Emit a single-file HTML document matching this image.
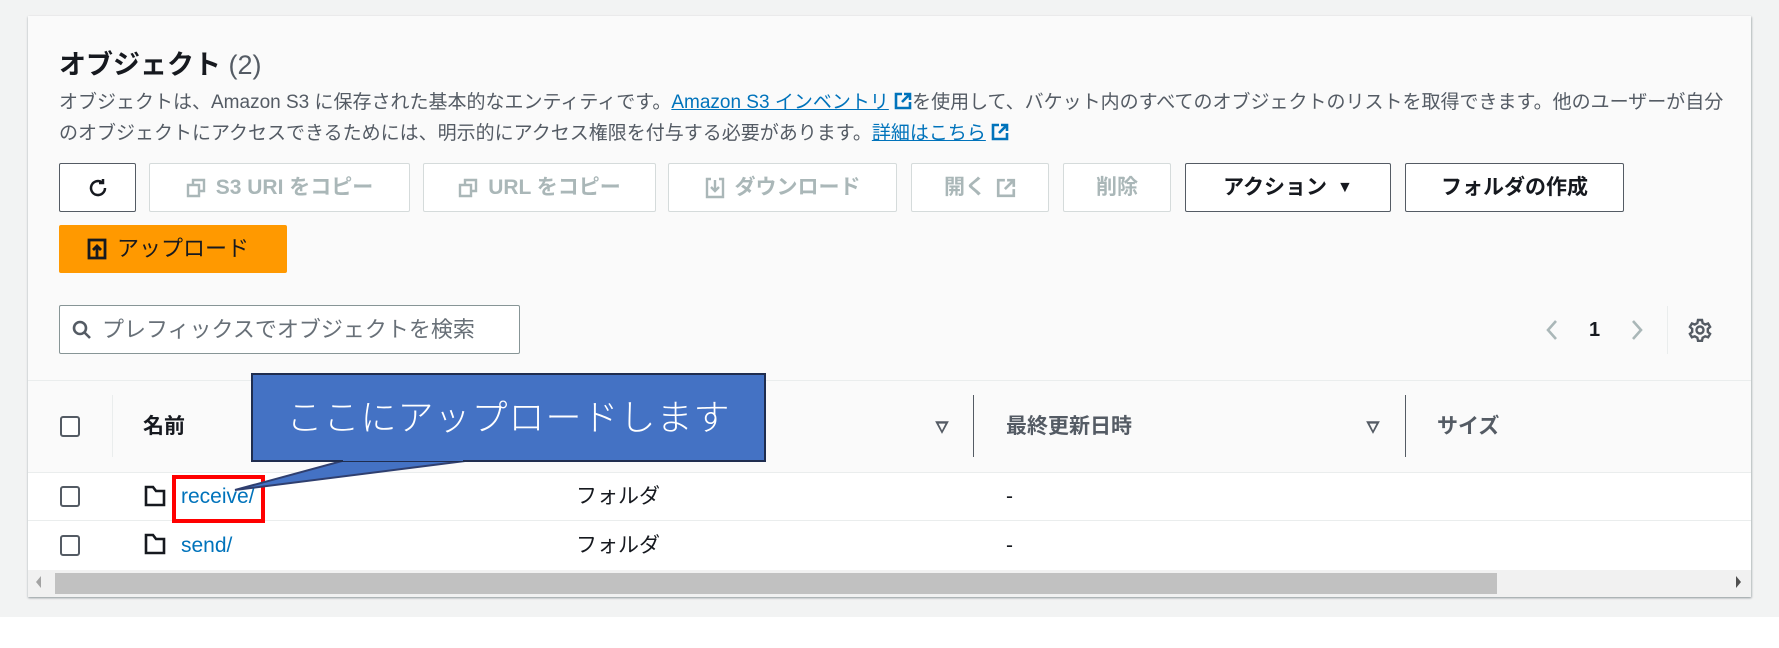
<!DOCTYPE html>
<html><head><meta charset="utf-8"><style>
*{margin:0;padding:0;box-sizing:border-box}
body{width:1779px;height:648px;background:#fff;position:relative;overflow:hidden;font-family:"Liberation Sans","Noto Sans CJK JP",sans-serif;color:#16191f}
.a{position:absolute}
.bg{left:0;top:0;width:1779px;height:617px;background:#f2f3f3}
.card{left:28px;top:16px;width:1723px;height:581px;background:#fafafa;box-shadow:0 1px 2px rgba(0,28,36,.3),1px 1px 2px rgba(0,28,36,.15)}
.btn{position:absolute;top:163px;height:49px;border:1px solid #d5dbdb;border-radius:2px;background:#fff;color:#aab7b8;font-weight:bold;font-size:21px;display:flex;align-items:center;justify-content:center;gap:10px;line-height:1}
.en{border:1px solid #545b64;color:#16191f}
.desc{left:59px;font-size:19px;color:#545b64;white-space:nowrap;line-height:1}
.lnk{color:#0073bb;text-decoration:underline}
.cb{position:absolute;left:60px;width:20px;height:21px;border:2px solid #545b64;border-radius:3px;background:#fff}
.cell{position:absolute;height:48px;display:flex;align-items:center;line-height:1;font-size:21px}
.hd{font-weight:bold;color:#545b64}
.vd{position:absolute;width:1px;background:#545b64;top:395px;height:62px}
</style></head><body>
<div class="a bg"></div>
<div class="a card"></div>
<div class="a" style="left:59px;top:51px;font-size:27px;font-weight:bold;line-height:1.1">オブジェクト <span style="font-weight:normal;color:#545b64">(2)</span></div>
<div class="a desc" style="top:92px">オブジェクトは、Amazon S3 に保存された基本的なエンティティです。<span class="lnk">Amazon S3 インベントリ</span> <svg width="18" height="18" viewBox="0 0 18 18" fill="none" stroke="#0073bb" stroke-width="2.6" style="vertical-align:-2px"><path d="M8 2H2v14h14v-6M10 2h6v6M16 2L8 10"/></svg>を使用して、バケット内のすべてのオブジェクトのリストを取得できます。他のユーザーが自分</div>
<div class="a desc" style="top:123px">のオブジェクトにアクセスできるためには、明示的にアクセス権限を付与する必要があります。<span class="lnk">詳細はこちら</span> <svg width="18" height="18" viewBox="0 0 18 18" fill="none" stroke="#0073bb" stroke-width="2.6" style="vertical-align:-2px"><path d="M8 2H2v14h14v-6M10 2h6v6M16 2L8 10"/></svg></div>

<div class="btn en" style="left:59px;width:77px"><svg width="24" height="24" viewBox="0 0 24 24" fill="none" stroke="#16191f" stroke-width="2.5"><path d="M19 12a7 7 0 1 1-3-5.7"/><path d="M17 3v4h-4"/></svg></div>
<div class="btn" style="left:149px;width:261px"><svg width="20" height="20" viewBox="0 0 20 20" fill="none" stroke="#aab7b8" stroke-width="2.4"><path d="M2 7h11v11H2zM7 7V2h11v11h-5"/></svg>S3 URI をコピー</div>
<div class="btn" style="left:423px;width:233px"><svg width="20" height="20" viewBox="0 0 20 20" fill="none" stroke="#aab7b8" stroke-width="2.4"><path d="M2 7h11v11H2zM7 7V2h11v11h-5"/></svg>URL をコピー</div>
<div class="btn" style="left:668px;width:229px"><svg width="20" height="22" viewBox="0 0 20 22" fill="none" stroke="#aab7b8" stroke-width="2.4"><path d="M6 2H2v18h16V2h-4M10 3v11M6 10l4 4 4-4"/></svg>ダウンロード</div>
<div class="btn" style="left:911px;width:138px">開く <svg width="20" height="20" viewBox="0 0 18 18" fill="none" stroke="#aab7b8" stroke-width="2.4"><path d="M8 2H2v14h14v-6M10 2h6v6M16 2L8 10"/></svg></div>
<div class="btn" style="left:1063px;width:108px">削除</div>
<div class="btn en" style="left:1185px;width:206px">アクション <span style="font-size:16px">▼</span></div>
<div class="btn en" style="left:1405px;width:219px">フォルダの作成</div>
<div class="btn" style="left:59px;top:225px;width:228px;height:48px;background:#ff9900;border-color:#ff9900;color:#16191f;justify-content:flex-start;padding-left:27px;font-weight:normal;font-size:22px"><svg width="20" height="22" viewBox="0 0 20 22" fill="none" stroke="#16191f" stroke-width="2.8"><path d="M2 2h16v18H2z"/><path d="M10 19V8M6 12l4-4 4 4"/></svg>アップロード</div>

<div class="a" style="left:59px;top:305px;width:461px;height:49px;border:1px solid #879596;border-radius:2px;background:#fff;display:flex;align-items:center;padding-left:12px;font-size:22px;color:#687078;gap:10px;line-height:1"><svg width="20" height="20" viewBox="0 0 20 20" fill="none" stroke="#545b64" stroke-width="2.6"><circle cx="8" cy="8" r="6"/><path d="M12.5 12.5L18 18"/></svg>プレフィックスでオブジェクトを検索</div>

<svg class="a" style="left:1544px;top:318px" width="16" height="24" viewBox="0 0 16 24" fill="none" stroke="#aab7b8" stroke-width="2.6"><path d="M12 3L4 12l8 9"/></svg>
<div class="a" style="left:1589px;top:320px;font-size:20px;font-weight:bold;line-height:1">1</div>
<svg class="a" style="left:1629px;top:318px" width="16" height="24" viewBox="0 0 16 24" fill="none" stroke="#aab7b8" stroke-width="2.6"><path d="M4 3l8 9-8 9"/></svg>
<div class="a" style="left:1667px;top:306px;width:1px;height:48px;background:#eaeded"></div>
<svg class="a" style="left:1688px;top:318px" width="24" height="24" viewBox="0 0 24 24" fill="none" stroke="#545b64" stroke-width="2.4"><circle cx="12" cy="12" r="3.5"/><path d="M10 2h4l.6 3 2.6 1.5 2.9-1 2 3.4-2.3 2v3l2.3 2-2 3.4-2.9-1-2.6 1.5-.6 3h-4l-.6-3-2.6-1.5-2.9 1-2-3.4 2.3-2v-3l-2.3-2 2-3.4 2.9 1L9.4 5z"/></svg>

<div class="a" style="left:28px;top:380px;width:1723px;height:1px;background:#eaeded"></div>
<div class="a" style="left:28px;top:472px;width:1723px;height:98px;background:#fff"></div>
<div class="a" style="left:28px;top:472px;width:1723px;height:1px;background:#eaeded"></div>
<div class="a" style="left:28px;top:520px;width:1723px;height:1px;background:#eaeded"></div>
<div class="cb" style="top:416px"></div>
<div class="vd" style="left:112px;background:#eaeded"></div>
<div class="cell hd" style="left:143px;top:402px;color:#16191f">名前</div>
<svg class="a" style="left:934px;top:419px" width="16" height="16" viewBox="0 0 14 14"><path d="M1 2h12L7 13z" fill="#545b64"/><path d="M4 4h6L7 10z" fill="#fafafa"/></svg>
<div class="vd" style="left:973px"></div>
<div class="cell hd" style="left:1006px;top:402px">最終更新日時</div>
<svg class="a" style="left:1365px;top:419px" width="16" height="16" viewBox="0 0 14 14"><path d="M1 2h12L7 13z" fill="#545b64"/><path d="M4 4h6L7 10z" fill="#fafafa"/></svg>
<div class="vd" style="left:1405px"></div>
<div class="cell hd" style="left:1437px;top:402px">サイズ</div>

<div class="cb" style="top:486px"></div>
<svg class="a" style="left:144px;top:485px" width="22" height="22" viewBox="0 0 22 22" fill="none" stroke="#16191f" stroke-width="2.6"><path d="M2 2h7l3 4h8v14H2z"/></svg>
<div class="cell" style="left:181px;top:472px;color:#0073bb">receive/</div>
<div class="cell" style="left:576px;top:472px">フォルダ</div>
<div class="cell" style="left:1006px;top:472px">-</div>

<div class="cb" style="top:535px"></div>
<svg class="a" style="left:144px;top:533px" width="22" height="22" viewBox="0 0 22 22" fill="none" stroke="#16191f" stroke-width="2.6"><path d="M2 2h7l3 4h8v14H2z"/></svg>
<div class="cell" style="left:181px;top:521px;color:#0073bb">send/</div>
<div class="cell" style="left:576px;top:521px">フォルダ</div>
<div class="cell" style="left:1006px;top:521px">-</div>

<div class="a" style="left:28px;top:570px;width:1723px;height:27px;background:#f1f1f1"></div>
<div class="a" style="left:55px;top:573px;width:1442px;height:21px;background:#c1c1c1"></div>
<div class="a" style="left:36px;top:576px;width:0;height:0;border:6px solid transparent;border-right:5px solid #a3a3a3;border-left:0"></div>
<div class="a" style="left:1736px;top:576px;width:0;height:0;border:6px solid transparent;border-left:5px solid #505050;border-right:0"></div>

<div class="a" style="left:172px;top:475px;width:93px;height:48px;border:4px solid #ff0000"></div>
<svg class="a" style="left:0;top:0" width="1779" height="648"><polygon points="342,461 465,461 235,490" fill="#4472c4" stroke="#2f3f6f" stroke-width="2"/></svg>
<div class="a" style="left:251px;top:373px;width:515px;height:89px;background:#4472c4;border:2px solid #1f2d4f;color:#fff;font-size:36px;font-weight:300;display:flex;align-items:center;justify-content:center;letter-spacing:1px;padding-bottom:6px">ここにアップロードします</div>
<div class="a" style="left:343px;top:458px;width:120px;height:3px;background:#4472c4"></div>
</body></html>
